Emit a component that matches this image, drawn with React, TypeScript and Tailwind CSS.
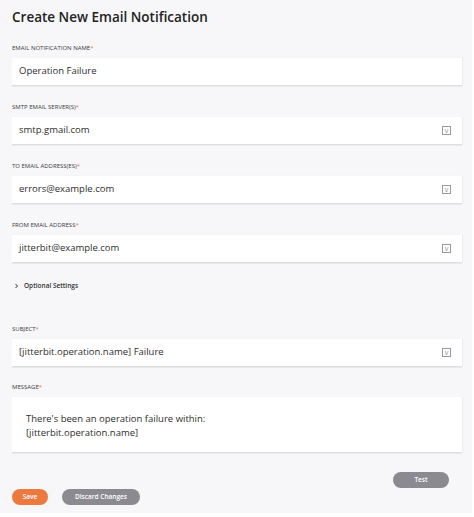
const font = { fontFamily: '"Open Sans", "Noto Sans", sans-serif' };

function Label({ text, required = true }: { text: string; required?: boolean }) {
  return (
    <div className="text-[6px] leading-[10px] text-[#3a3a3a] uppercase">
      {text}
      {required && <span className="text-[#e8773a]">*</span>}
    </div>
  );
}

function VarIcon() {
  return (
    <span className="flex h-[9px] w-[9px] items-center justify-center border border-[#9a9a9a] text-[6px] leading-none text-[#777]">
      V
    </span>
  );
}

function Field({ label, value, required = true, icon = true }: { label: string; value: string; required?: boolean; icon?: boolean }) {
  return (
    <div className="flex flex-col">
      <Label text={label} required={required} />
      <div className="mt-[5px] flex h-[27px] items-center justify-between bg-white pl-[7px] pr-[11px] shadow-[0_1.5px_0_#dedee2,1px_0_1px_#ececf0]">
        <span className="text-[9.5px] text-[#2e2e2e]">{value}</span>
        {icon && <VarIcon />}
      </div>
    </div>
  );
}

export default function App() {
  return (
    <div className="bg-white">
      <div className="h-[513px] w-[472px] bg-[#f7f7f9] pl-[12px] pr-[10px] pt-[7px]" style={font}>
        <h1 className="text-[13.5px] leading-[20px] font-semibold text-[#222]">Create New Email Notification</h1>

        <div className="mt-[16px] flex flex-col gap-[17px]">
          <Field label="Email Notification Name" value="Operation Failure" icon={false} />
          <Field label="SMTP Email Server(s)" value="smtp.gmail.com" />
          <Field label="To Email Address(es)" value="errors@example.com" />
          <Field label="From Email Address" value="jitterbit@example.com" />
        </div>

        <div className="mt-[18px] flex h-[11px] items-center gap-[5px] pl-[2px] text-[6.5px] font-semibold text-[#333]">
          <svg width="5" height="6" viewBox="0 0 5 6" fill="none" stroke="#333" strokeWidth="1">
            <path d="M1.5 1 L3.5 3 L1.5 5" />
          </svg>
          <span>Optional Settings</span>
        </div>

        <div className="mt-[33px] flex flex-col gap-[16px]">
          <Field label="Subject" value="[jitterbit.operation.name] Failure" />
          <div className="flex flex-col">
            <Label text="Message" />
            <div className="mt-[5px] h-[55px] bg-white px-[14px] pt-[15px] text-[9.5px] leading-[14px] text-[#2e2e2e] shadow-[0_1.5px_0_#dedee2,1px_0_1px_#ececf0]">
              <div>There's been an operation failure within:</div>
              <div>[jitterbit.operation.name]</div>
            </div>
          </div>
        </div>

        <div className="mt-[20px] flex justify-end pr-[13px]">
          <button className="h-[16px] w-[56px] rounded-full bg-[#8b8a91] text-[6.5px] font-semibold text-white">Test</button>
        </div>
        <div className="mt-[1px] flex gap-[14px]">
          <button className="h-[16px] w-[36px] rounded-full bg-[#ec7a3f] text-[6.5px] font-semibold text-white">Save</button>
          <button className="h-[16px] w-[78px] rounded-full bg-[#8b8a91] text-[6.5px] font-semibold text-white">Discard Changes</button>
        </div>
      </div>
    </div>
  );
}
